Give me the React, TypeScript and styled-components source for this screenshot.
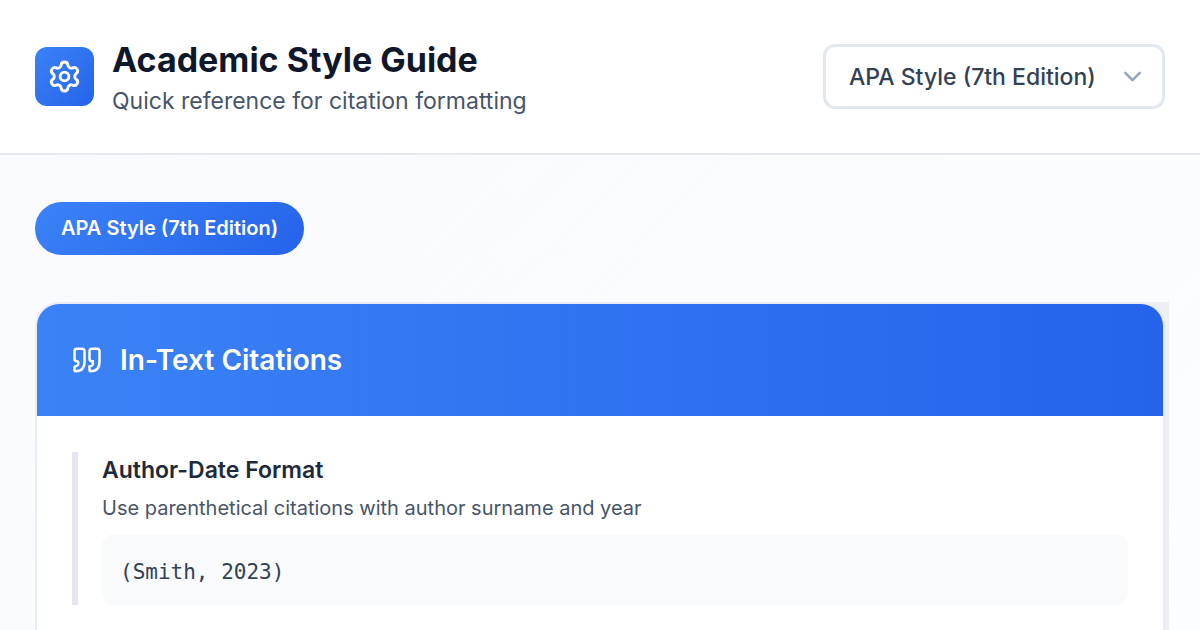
import React, { useState } from "react";
import styled, { createGlobalStyle } from "styled-components";
import { ChevronDown, Settings } from "lucide-react";

const GlobalStyle = createGlobalStyle`
  *, *::before, *::after { box-sizing: border-box; }
  body {
    margin: 0;
    background: #fafbfd;
    font-family: Inter, "Liberation Sans", sans-serif;
    color: #1e293b;
    -webkit-font-smoothing: antialiased;
  }
  h1, h2, h3, p { margin: 0; }
`;

const blue = "#3b82f6 0%, #2563eb 100%";

const Page = styled.div`
  min-height: 100vh;
  background: linear-gradient(135deg, #f9fafd 0%, #fcfdfe 100%);
`;

const Header = styled.header`
  display: flex;
  align-items: flex-start;
  justify-content: space-between;
  gap: 24px;
  padding: 36px 35px 37px;
  background: #fff;
  border-bottom: 2px solid #e5eaf0;
`;

const Brand = styled.div`
  display: flex;
  align-items: center;
  gap: 18px;
  height: 80px;
`;

const Logo = styled.div`
  display: grid;
  place-items: center;
  flex: none;
  width: 59px;
  height: 59px;
  border-radius: 12px;
  color: #fff;
  background: linear-gradient(135deg, ${blue});
`;

const Title = styled.h1`
  font-size: 34px;
  line-height: 50px;
  font-weight: 700;
  color: #0f172a;
`;

const Subtitle = styled.p`
  font-size: 23px;
  line-height: 32px;
  color: #475569;
`;

const Picker = styled.label`
  position: relative;
  flex: none;
  margin-top: 8px;
`;

const Select = styled.select`
  appearance: none;
  display: block;
  width: 342px;
  height: 65px;
  padding: 0 60px 0 23px;
  border: 3px solid #e2e8f0;
  border-radius: 12px;
  background: #fff;
  color: #334155;
  font-family: inherit;
  font-size: 23px;
  font-weight: 500;
`;

const Arrow = styled(ChevronDown)`
  position: absolute;
  right: 18px;
  top: 18px;
  color: #94a3b8;
  pointer-events: none;
`;

const Main = styled.main`
  display: flex;
  flex-direction: column;
  align-items: flex-start;
  gap: 47px;
  padding: 47px 31px 48px 35px;
`;

const Badge = styled.span`
  padding: 0 26px;
  border-radius: 27px;
  background: linear-gradient(135deg, ${blue});
  color: #fff;
  font-size: 20px;
  line-height: 53px;
  font-weight: 600;
`;

const CardShade = styled.div`
  width: 100%;
  padding-right: 4px;
  background: linear-gradient(to left, #eeeff2 24px, transparent 60px);
`;

const Card = styled.section`
  border: 2px solid #e8edf3;
  border-radius: 24px;
  background: #fff;
  overflow: hidden;
`;

const CardHeader = styled.div`
  display: flex;
  align-items: center;
  gap: 18px;
  height: 112px;
  padding: 0 35px;
  background: linear-gradient(90deg, ${blue});
  color: #fff;
`;

const CardTitle = styled.h2`
  font-size: 28px;
  line-height: 40px;
  font-weight: 600;
`;

const CardBody = styled.div`
  padding: 36px 35px 60px;
`;

const Rule = styled.article`
  padding-left: 24px;
  border-left: 6px solid #e4e7f2;
`;

const RuleTitle = styled.h3`
  font-size: 23px;
  line-height: 36px;
  font-weight: 600;
`;

const RuleText = styled.p`
  font-size: 20px;
  line-height: 40px;
  color: #475569;
`;

const Example = styled.code`
  display: block;
  margin-top: 6px;
  padding: 6px 18px 0;
  border-radius: 12px;
  background: #f8fafc;
  color: #334155;
  font-family: "DejaVu Sans Mono", monospace;
  font-size: 21px;
  line-height: 65px;
`;

const QuoteIcon = () => (
  <svg
    width="30"
    height="30"
    viewBox="0 0 24 24"
    fill="none"
    stroke="currentColor"
    strokeWidth="2"
    strokeLinecap="round"
    strokeLinejoin="round"
    aria-hidden
  >
    <path d="M3 21c3 0 7-1 7-8V5c0-1.25-.756-2.017-2-2H4c-1.25 0-2 .75-2 1.972V11c0 1.25.75 2 2 2 1 0 1 0 1 1v1c0 1-1 2-2 2s-1 .008-1 1.031V20c0 1 0 1 1 1z" />
    <path d="M15 21c3 0 7-1 7-8V5c0-1.25-.757-2.017-2-2h-4c-1.25 0-2 .75-2 1.972V11c0 1.25.75 2 2 2h.75c0 2.25.25 4-2.75 4v3c0 1 0 1 1 1z" />
  </svg>
);

const styles = ["APA Style (7th Edition)", "MLA Style (9th Edition)", "Chicago Style (17th Edition)"];

export default function App() {
  const [current, setCurrent] = useState(styles[0]);
  return (
    <Page>
      <GlobalStyle />
      <Header>
        <Brand>
          <Logo>
            <Settings size={35} aria-hidden />
          </Logo>
          <div>
            <Title>Academic Style Guide</Title>
            <Subtitle>Quick reference for citation formatting</Subtitle>
          </div>
        </Brand>
        <Picker>
          <Select aria-label="Citation style" value={current} onChange={(e) => setCurrent(e.target.value)}>
            {styles.map((name) => (
              <option key={name}>{name}</option>
            ))}
          </Select>
          <Arrow size={29} aria-hidden />
        </Picker>
      </Header>
      <Main>
        <Badge>{current}</Badge>
        <CardShade>
          <Card>
            <CardHeader>
              <QuoteIcon />
              <CardTitle>In-Text Citations</CardTitle>
            </CardHeader>
            <CardBody>
              <Rule>
                <RuleTitle>Author-Date Format</RuleTitle>
                <RuleText>Use parenthetical citations with author surname and year</RuleText>
                <Example>(Smith, 2023)</Example>
              </Rule>
            </CardBody>
          </Card>
        </CardShade>
      </Main>
    </Page>
  );
}
